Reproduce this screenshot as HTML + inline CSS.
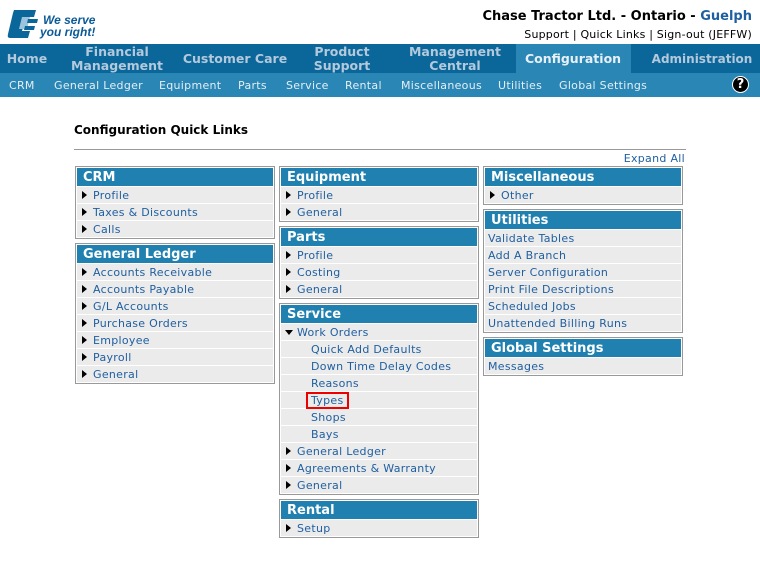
<!DOCTYPE html>
<html><head><style>
*{margin:0;padding:0;box-sizing:border-box}
body{width:760px;height:563px;background:#fff;font-family:"DejaVu Sans",Verdana,sans-serif;position:relative;overflow:hidden;font-size:11px}
.a{position:absolute;white-space:nowrap}
.nav{position:absolute;left:0;top:44px;width:760px;height:29px;background:#0b6699}
.nv{position:absolute;color:#b3c9dc;font-weight:bold;font-size:12.5px;line-height:14px;text-align:center;transform:translateX(-50%);white-space:nowrap}
.sub{position:absolute;left:0;top:73px;width:760px;height:24px;background:#2a86b4}
.sv{position:absolute;top:79px;color:#e6eef5;font-size:11px;letter-spacing:0.3px}
.box{position:absolute;width:200px;border:1px solid #999;background:#fff;padding:1px 1px 0 1px}
.h{height:18px;background:#2080b0;color:#fff;font-weight:bold;font-size:13px;line-height:17px;padding-top:1px;padding-left:6px}
.r{height:16px;margin-top:1px;background:#ebebeb;color:#1f5fa0;font-size:11px;line-height:15px;padding-top:1px;padding-left:16px;position:relative;letter-spacing:0.3px}
.r.last{margin-bottom:1px}
.r.t:before{content:"";position:absolute;left:5px;top:4px;border-left:5px solid #000;border-top:4px solid transparent;border-bottom:4px solid transparent}
.r.d:before{content:"";position:absolute;left:4px;top:6px;border-top:5px solid #000;border-left:4px solid transparent;border-right:4px solid transparent}
.r.i{padding-left:30px}
.r.p{padding-left:3px}
</style></head><body>
<svg class="a" style="left:6px;top:8px" width="90" height="32" viewBox="0 0 90 32">
<path d="M8 2h22l-2 7h-8l-4 14h8l-2 7H4q-3 0-2-4L7 5q1-3 1-3z" fill="#0b6699"/>
<path d="M16 9h8l-3 12h-8z" fill="#9cc3de"/>
<path d="M22 11h10l-1 4H21zM19 18h10l-1 4H18z" fill="#0b6699"/>
<text x="37" y="16" font-family="Liberation Sans" font-style="italic" font-weight="bold" font-size="12" fill="#0b5a96">We serve</text>
<text x="34" y="28" font-family="Liberation Sans" font-style="italic" font-weight="bold" font-size="12" fill="#0b5a96">you right!</text>
</svg>
<div class="a" style="right:8px;top:9px;font-size:13px;font-weight:bold;color:#000">Chase Tractor Ltd. - Ontario - <span style="color:#1f5fa0">Guelph</span></div>
<div class="a" style="right:8px;top:28px;font-size:11px;color:#000;letter-spacing:0.2px">Support | Quick Links | Sign-out (JEFFW)</div>
<div class="nav"></div>
<div class="a" style="left:516px;top:44px;width:115px;height:29px;background:#2a86b4"></div>
<div class="nv" style="left:27px;top:52px">Home</div>
<div class="nv" style="left:117px;top:45px">Financial<br>Management</div>
<div class="nv" style="left:235px;top:52px">Customer Care</div>
<div class="nv" style="left:342px;top:45px">Product<br>Support</div>
<div class="nv" style="left:455px;top:45px">Management<br>Central</div>
<div class="nv" style="left:573px;top:52px;color:#e8f0f7">Configuration</div>
<div class="nv" style="left:702px;top:52px;font-size:12px">Administration</div>
<div class="sub"></div>
<div class="sv" style="left:9px">CRM</div>
<div class="sv" style="left:54px">General Ledger</div>
<div class="sv" style="left:159px">Equipment</div>
<div class="sv" style="left:238px">Parts</div>
<div class="sv" style="left:286px">Service</div>
<div class="sv" style="left:345px">Rental</div>
<div class="sv" style="left:401px">Miscellaneous</div>
<div class="sv" style="left:498px">Utilities</div>
<div class="sv" style="left:559px">Global Settings</div>
<div class="a" style="left:732px;top:76px;width:17px;height:17px;border-radius:50%;background:#000;border:1px solid #fff;color:#fff;font-weight:bold;font-size:13px;line-height:15px;text-align:center">?</div>
<div class="a" style="left:74px;top:123px;font-size:12px;font-weight:bold;color:#000">Configuration Quick Links</div>
<div class="a" style="left:74px;top:149px;width:612px;height:1px;background:#999"></div>
<div class="a" style="right:75px;top:152px;color:#1f5fa0;letter-spacing:0.3px">Expand All</div>

<div class="box" style="left:75px;top:166px"><div class="h">CRM</div>
<div class="r t">Profile</div><div class="r t">Taxes &amp; Discounts</div><div class="r t last">Calls</div></div>
<div class="box" style="left:75px;top:243px"><div class="h">General Ledger</div>
<div class="r t">Accounts Receivable</div><div class="r t">Accounts Payable</div><div class="r t">G/L Accounts</div><div class="r t">Purchase Orders</div><div class="r t">Employee</div><div class="r t">Payroll</div><div class="r t last">General</div></div>

<div class="box" style="left:279px;top:166px"><div class="h">Equipment</div>
<div class="r t">Profile</div><div class="r t last">General</div></div>
<div class="box" style="left:279px;top:226px"><div class="h">Parts</div>
<div class="r t">Profile</div><div class="r t">Costing</div><div class="r t last">General</div></div>
<div class="box" style="left:279px;top:303px"><div class="h">Service</div>
<div class="r d">Work Orders</div><div class="r i">Quick Add Defaults</div><div class="r i">Down Time Delay Codes</div><div class="r i">Reasons</div><div class="r i"><span style="outline:2px solid #e00;outline-offset:0;padding:0 3px;margin-left:-3px">Types</span></div><div class="r i">Shops</div><div class="r i">Bays</div><div class="r t">General Ledger</div><div class="r t">Agreements &amp; Warranty</div><div class="r t last">General</div></div>
<div class="box" style="left:279px;top:499px"><div class="h">Rental</div>
<div class="r t last">Setup</div></div>

<div class="box" style="left:483px;top:166px"><div class="h">Miscellaneous</div>
<div class="r t last">Other</div></div>
<div class="box" style="left:483px;top:209px"><div class="h">Utilities</div>
<div class="r p">Validate Tables</div><div class="r p">Add A Branch</div><div class="r p">Server Configuration</div><div class="r p">Print File Descriptions</div><div class="r p">Scheduled Jobs</div><div class="r p last">Unattended Billing Runs</div></div>
<div class="box" style="left:483px;top:337px"><div class="h">Global Settings</div>
<div class="r p last">Messages</div></div>
</body></html>
